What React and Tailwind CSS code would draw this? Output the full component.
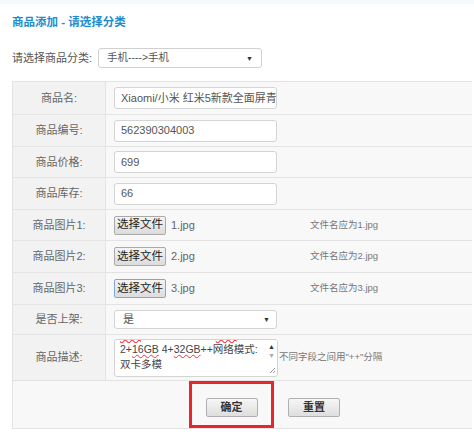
import React from 'react'

const font = { fontFamily: '"Liberation Sans", "Noto Sans CJK SC", sans-serif' }

function Row({ label, h, children }) {
  return (
    <div className={`flex border-b border-[#e3e3e3] ${h}`}>
      <div className="w-[93px] shrink-0 flex items-center justify-center bg-[#f2f2f2] border-r border-[#e3e3e3] text-[11px] text-[#666]">
        {label}
      </div>
      <div className="flex-1 flex items-center pl-2 bg-[#f8f8f8]">{children}</div>
    </div>
  )
}

function TextInput({ value }) {
  return (
    <div className="w-[163px] h-[22px] bg-white border border-[#d4d4d4] rounded-[3px] flex items-center pl-[6px] text-[11px] text-[#555] overflow-hidden whitespace-nowrap">
      {value}
    </div>
  )
}

function Arrow() {
  return <span className="text-[7px] text-[#333] leading-none">▼</span>
}

function FileInput({ name, note, focused }) {
  return (
    <>
      <span className="w-[196px] flex items-center gap-[5px]">
        <span
          className={`h-[19px] w-[52px] flex items-center justify-center text-[11.5px] text-[#222] rounded-[2px] bg-gradient-to-b from-[#f4f4f4] to-[#dcdcdc] border ${
            focused ? 'border-[#7ea6dc]' : 'border-[#a9a9a9]'
          }`}
        >
          选择文件
        </span>
        <span className="text-[11px] text-[#666]">{name}</span>
      </span>
      <span className="text-[9.5px] text-[#777]">{note}</span>
    </>
  )
}

function Btn({ children }) {
  return (
    <span className="h-[19px] w-[52px] flex items-center justify-center text-[11px] font-bold text-[#333] rounded-[2px] bg-gradient-to-b from-[#f6f6f6] to-[#dedede] border border-[#b0b0b0]">
      {children}
    </span>
  )
}

export default function App() {
  return (
    <div className="w-[474px] h-[440px] bg-white overflow-hidden" style={font}>
      <div className="h-[4px] bg-[#f6f9fb]" />
      <div className="pl-3 pt-[11px] text-[11.5px] font-bold text-[#1e8bcb] leading-[14px]">
        商品添加 - 请选择分类
      </div>

      <div className="flex items-center pl-3 mt-[19px] h-[20px]">
        <span className="text-[11px] text-[#555] w-[86px]">请选择商品分类:</span>
        <div className="w-[164px] h-[20px] border border-[#d0d0d0] rounded-[3px] bg-white flex items-center justify-between pl-[8px] pr-[8px] text-[10.5px] text-[#555]">
          <span>手机----&gt;手机</span>
          <Arrow />
        </div>
      </div>

      <div className="ml-3 mt-[13px] w-[460px] border-t border-l border-[#e3e3e3]">
        <Row label="商品名:" h="h-[33px]">
          <TextInput value="Xiaomi/小米 红米5新款全面屏青春版" />
        </Row>
        <Row label="商品编号:" h="h-[32px]">
          <TextInput value="562390304003" />
        </Row>
        <Row label="商品价格:" h="h-[31px]">
          <TextInput value="699" />
        </Row>
        <Row label="商品库存:" h="h-[32px]">
          <TextInput value="66" />
        </Row>
        <Row label="商品图片1:" h="h-[31px]">
          <FileInput name="1.jpg" note="文件名应为1.jpg" />
        </Row>
        <Row label="商品图片2:" h="h-[32px]">
          <FileInput name="2.jpg" note="文件名应为2.jpg" />
        </Row>
        <Row label="商品图片3:" h="h-[32px]">
          <FileInput name="3.jpg" note="文件名应为3.jpg" focused />
        </Row>
        <Row label="是否上架:" h="h-[30px]">
          <div className="w-[163px] h-[19px] bg-white border border-[#d4d4d4] rounded-[3px] flex items-center justify-between pl-[8px] pr-[6px] text-[11px] text-[#555]">
            <span>是</span>
            <Arrow />
          </div>
        </Row>
        <Row label="商品描述:" h="h-[46px]">
          <div className="w-[164px] h-[38px] bg-white border border-[#d4d4d4] rounded-[3px] flex overflow-hidden">
            <div className="flex-1 overflow-hidden pl-[5px] text-[10.5px] leading-[15px] text-[#444]">
              <div className="-mt-[13px] whitespace-nowrap">
                <div>
                  <span className="underline decoration-wavy decoration-red-500">6GB</span> 内存 存储容量:{' '}
                  <span className="underline decoration-wavy decoration-red-500">3GB</span>
                </div>
                <div>
                  2+<span className="underline decoration-wavy decoration-red-500 decoration-1">16GB</span> 4+
                  <span className="underline decoration-wavy decoration-red-500 decoration-1">32GB</span>++网络模式:
                </div>
                <div>双卡多模</div>
              </div>
            </div>
            <div className="w-[11px] flex flex-col items-center justify-between py-[2px] bg-white">
              <span className="text-[7px] leading-[9px] text-[#333]">▲</span>
              <span className="text-[7px] leading-[9px] text-[#aaa]">▼</span>
              <div className="flex-1" />
              <svg width="8" height="8" viewBox="0 0 8 8">
                <path d="M7 2 L2 7 M7 5 L5 7" stroke="#999" strokeWidth="1" />
              </svg>
            </div>
          </div>
          <span className="text-[9.5px] text-[#777] ml-[1px]">不同字段之间用"++"分隔</span>
        </Row>
        <div className="h-[48px] bg-[#f8f8f8] border-b border-[#e3e3e3] flex items-center pl-[176px]">
          <div className="w-[85px] h-[47px] border-[3px] border-[#e8252b] flex items-center justify-center pt-[6px]">
            <Btn>确定</Btn>
          </div>
          <div className="ml-[14px] pt-[6px]">
            <Btn>重置</Btn>
          </div>
        </div>
      </div>
    </div>
  )
}
